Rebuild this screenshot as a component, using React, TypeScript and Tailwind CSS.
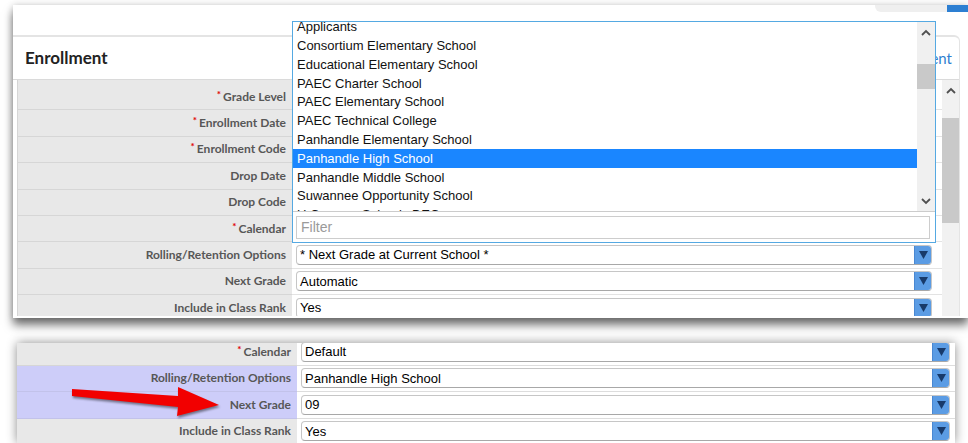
import React from "react";

const schools = [
  "Applicants",
  "Consortium Elementary School",
  "Educational Elementary School",
  "PAEC Charter School",
  "PAEC Elementary School",
  "PAEC Technical College",
  "Panhandle Elementary School",
  "Panhandle High School",
  "Panhandle Middle School",
  "Suwannee Opportunity School",
  "U Campus Schools DEO",
];

// rows under the open list keep empty selects, the list covers them
const topRows = [
  { label: "Grade Level", required: true, value: "" },
  { label: "Enrollment Date", required: true, value: "" },
  { label: "Enrollment Code", required: true, value: "" },
  { label: "Drop Date", required: false, value: "" },
  { label: "Drop Code", required: false, value: "" },
  { label: "Calendar", required: true, value: "" },
  { label: "Rolling/Retention Options", required: false, value: "* Next Grade at Current School *" },
  { label: "Next Grade", required: false, value: "Automatic" },
  { label: "Include in Class Rank", required: false, value: "Yes" },
];

const bottomRows = [
  { label: "Calendar", required: true, value: "Default", marked: false },
  { label: "Rolling/Retention Options", required: false, value: "Panhandle High School", marked: true },
  { label: "Next Grade", required: false, value: "09", marked: true },
  { label: "Include in Class Rank", required: false, value: "Yes", marked: false },
];

function Label({ text, required }: { text: string; required: boolean }) {
  return (
    <span className="flex items-start font-['Lato',sans-serif] text-[12px] font-bold leading-[16px] text-[#575757]">
      {required && <span className="mr-[2px] text-[10px] leading-[10px] text-[#e00000]">*</span>}
      <span>{text}</span>
    </span>
  );
}

function Select({ value }: { value: string }) {
  return (
    <div className="flex h-[20px] flex-1 rounded-[4px] border border-[#c6c6c6] border-b-[#a8a8a8] bg-white">
      <div className="flex flex-1 items-center pl-[3px] font-['Liberation_Sans',Arial,sans-serif] text-[13px] text-black">
        {value}
      </div>
      <div className="flex w-[17px] items-center justify-center rounded-r-[3px] border-l border-[#4a88d2] bg-[#5b9ce4]">
        <svg width="9" height="8" viewBox="0 0 9 8">
          <polygon points="0,0 9,0 4.5,8" fill="#183a6a" />
        </svg>
      </div>
    </div>
  );
}

function Chevron({ up }: { up?: boolean }) {
  return (
    <svg width="10" height="7" viewBox="0 0 10 7">
      <polyline
        points={up ? "1,6 5,2 9,6" : "1,1 5,5 9,1"}
        fill="none"
        stroke="#505050"
        strokeWidth="1.8"
      />
    </svg>
  );
}

function SchoolList() {
  return (
    <div className="absolute left-[279px] top-[16px] z-10 flex h-[222px] w-[644px] flex-col border border-[#55a9e2] bg-white">
      <div className="flex h-[189px]">
        <div className="flex-1 overflow-hidden">
          <div className="-mt-[4.4px] font-['Liberation_Sans',Arial,sans-serif] text-[13px]">
            {schools.map((s) => (
              <div
                key={s}
                className={
                  s === "Panhandle High School"
                    ? "flex h-[18.8px] items-center bg-[#1a86ff] pl-[4px] text-white"
                    : "flex h-[18.8px] items-center pl-[4px] text-[#111]"
                }
              >
                {s}
              </div>
            ))}
          </div>
        </div>
        <div className="flex w-[18px] flex-col items-center bg-[#f0f0f0]">
          <div className="mt-[7px]">
            <Chevron up />
          </div>
          <div className="mt-[28px] h-[25px] w-full bg-[#c9c9c9]" />
          <div className="mt-auto mb-[6px]">
            <Chevron />
          </div>
        </div>
      </div>
      <div className="flex flex-1 border-t border-[#cccccc] pl-[3px] pr-[5px] pt-[4px] pb-[5px]">
        <div className="flex flex-1 items-center border-[1.5px] border-[#cdcdcd] pl-[4px] font-['Liberation_Sans',Arial,sans-serif] text-[14px] text-[#9a9a9a]">
          Filter
        </div>
      </div>
    </div>
  );
}

function TopShot() {
  return (
    <div className="relative ml-[13px] mt-[5px] h-[313px] w-[955px] bg-white shadow-[0_7px_9px_rgba(0,0,0,0.55),0_0_7px_rgba(0,0,0,0.18)]">
      <div className="flex h-[30px] justify-end">
        <div className="h-[7px] w-[72px] rounded-bl-[6px] bg-[#efefef]" />
        <div className="h-[7px] w-[21px] bg-[#2d7fd2]" />
      </div>
      <div className="w-[947px] rounded-tr-[6px] border-t-2 border-r border-[#e4e4e4]">
        <div className="flex h-[43px] items-center justify-between border-b border-[#dadada] pl-[12px] pr-[7px]">
          <span className="font-['Lato',sans-serif] text-[17px] font-bold text-[#222]">Enrollment</span>
          <span className="font-['Lato',sans-serif] text-[15px] text-[#2f7fd0]">Add Enrollment</span>
        </div>
        <div className="flex h-[236px] overflow-hidden">
          <div className="w-[4px] bg-white" />
          <div className="flex w-[926px] flex-col">
            <div className="flex h-[4px] shrink-0">
              <div className="w-[275px] border-l border-[#d4d4d4] bg-[#e8e8e8]" />
              <div className="flex-1" />
            </div>
            {topRows.map((r) => (
              <div key={r.label} className="flex h-[26.4px] shrink-0">
                <div className="flex w-[275px] items-center justify-end border-b border-l border-[#d6d6d6] bg-[#e8e8e8] pr-[6px]">
                  <Label text={r.label} required={r.required} />
                </div>
                <div className="flex flex-1 items-center border-b border-[#e3e3e3] pl-[4px] pr-[10px]">
                  <Select value={r.value} />
                </div>
              </div>
            ))}
          </div>
          <div className="flex w-[17px] flex-col items-center bg-[#f1f1f1]">
            <div className="mt-[7px]">
              <Chevron up />
            </div>
            <div className="mt-[24px] h-[105px] w-full bg-[#c9c9c9]" />
          </div>
        </div>
      </div>
      <SchoolList />
    </div>
  );
}

function BottomShot() {
  return (
    <div className="relative ml-[17px] mt-[25px] h-[100px] w-[938px] overflow-hidden bg-white shadow-[0_0_10px_rgba(0,0,0,0.45)]">
      <div className="-mt-[4px] flex flex-col">
        {bottomRows.map((r) => (
          <div key={r.label} className="flex h-[26.5px] shrink-0">
            <div
              className={
                r.marked
                  ? "flex w-[280px] items-center justify-end border-b border-[#c2c2ea] bg-[#cdcdf9] pr-[6px]"
                  : "flex w-[280px] items-center justify-end border-b border-[#d6d6d6] bg-[#e8e8e8] pr-[6px]"
              }
            >
              <Label text={r.label} required={r.required} />
            </div>
            <div className="flex flex-1 items-center border-b border-[#dddddd] pl-[4px] pr-[5px]">
              <Select value={r.value} />
            </div>
          </div>
        ))}
      </div>
      <svg
        className="absolute left-0 top-0 drop-shadow-[1px_2px_1px_rgba(0,0,0,0.45)]"
        width="220"
        height="100"
        viewBox="0 0 220 100"
      >
        <polygon points="55,46 161,53 161,44 202,62 160,73 161,64 55,53" fill="#f20000" />
      </svg>
    </div>
  );
}

export default function App() {
  return (
    <div className="h-[443px] w-[968px] overflow-hidden bg-white">
      <TopShot />
      <BottomShot />
    </div>
  );
}
